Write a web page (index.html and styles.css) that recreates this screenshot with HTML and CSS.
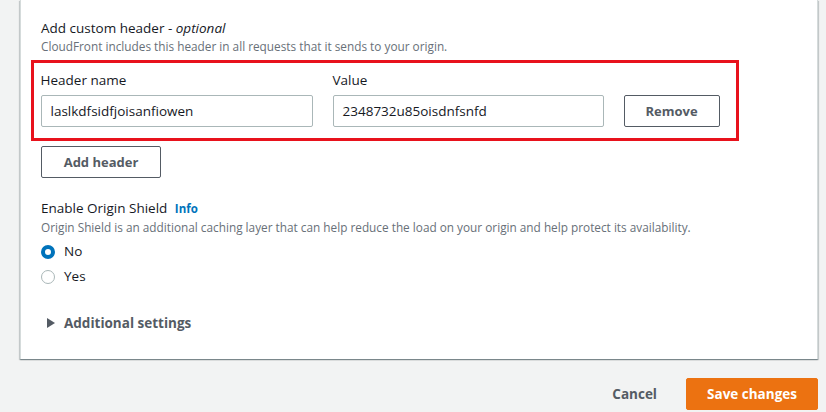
FILE: index.html
```html
<!DOCTYPE html>
<html>
<head>
<meta charset="utf-8">
<link rel="stylesheet" href="styles.css">
</head>
<body>
<div class="page">
  <div class="card">
    <div class="field-title">Add custom header - <em>optional</em></div>
    <div class="desc">CloudFront includes this header in all requests that it sends to your origin.</div>
    <div class="highlight">
      <div class="header-row">
        <div class="col col-name">
          <div class="label">Header name</div>
          <div class="input">laslkdfsidfjoisanfiowen</div>
        </div>
        <div class="col col-value">
          <div class="label">Value</div>
          <div class="input">2348732u85oisdnfsnfd</div>
        </div>
        <div class="col col-remove">
          <button class="btn btn-remove">Remove</button>
        </div>
      </div>
    </div>
    <button class="btn btn-add">Add header</button>

    <div class="shield">
      <div class="field-title">Enable Origin Shield <span class="info">Info</span></div>
      <div class="desc">Origin Shield is an additional caching layer that can help reduce the load on your origin and help protect its availability.</div>
      <div class="radios">
        <label class="radio"><span class="dot checked"></span>No</label>
        <label class="radio"><span class="dot"></span>Yes</label>
      </div>
    </div>

    <div class="expand"><span class="tri"></span>Additional settings</div>
  </div>

  <div class="actions">
    <button class="link-btn">Cancel</button>
    <button class="primary">Save changes</button>
  </div>
</div>
</body>
</html>
```

FILE: styles.css
```css
html, body {
  margin: 0;
  padding: 0;
}
body {
  background: #f2f3f3;
  font-family: "Open Sans", "Noto Sans", sans-serif;
  color: #16191f;
  width: 826px;
  height: 412px;
  overflow: hidden;
}
.page {
  padding-left: 20px;
  width: 798px;
}
.card {
  background: #fff;
  border-left: 1px solid #d5dbdb;
  border-right: 1px solid #d5dbdb;
  box-shadow: 0 1px 1px 0 rgba(0, 28, 36, 0.3), 1px 1px 1px 0 rgba(0, 28, 36, 0.15), -1px 1px 1px 0 rgba(0, 28, 36, 0.15);
  padding: 19px 20px 19px 20px;
  height: 321px;
}
.field-title {
  font-size: 13.5px;
  line-height: 18px;
  color: #16191f;
}
.field-title em {
  font-style: italic;
}
.desc {
  font-size: 11.8px;
  line-height: 18px;
  color: #687078;
}
.highlight {
  margin-left: -10px;
  margin-top: 5px;
  width: 695.5px;
  border: 3.5px solid #e8121c;
  padding: 8px 0 11px 6.5px;
}
.header-row {
  display: flex;
  align-items: flex-end;
}
.label {
  font-size: 13.5px;
  line-height: 18px;
  margin-bottom: 6px;
}
.col-name { width: 272px; margin-right: 20px; }
.col-value { width: 271px; margin-right: 20px; }
.input {
  box-sizing: border-box;
  height: 32px;
  border: 1px solid #aab7b8;
  border-radius: 2px;
  padding: 0 9px;
  font-size: 13.5px;
  line-height: 30px;
  color: #16191f;
}
.btn {
  box-sizing: border-box;
  background: #fff;
  border: 1px solid #545b64;
  border-radius: 2px;
  color: #545b64;
  font-family: "Open Sans", "Noto Sans", sans-serif;
  font-weight: 700;
  font-size: 13px;
  height: 32px;
  padding: 0 19px;
  cursor: pointer;
}
.btn-remove {
  width: 96px;
}
.btn-add {
  display: block;
  width: 120px;
  margin-top: 5px;
}
.shield {
  margin-top: 21px;
}
.info {
  color: #0073bb;
  font-weight: 700;
  font-size: 11.5px;
  margin-left: 4px;
}
.radios {
  margin-top: 3px;
}
.radio {
  display: flex;
  align-items: center;
  font-size: 13.5px;
  line-height: 25px;
  height: 25px;
}
.dot {
  box-sizing: border-box;
  width: 14px;
  height: 14px;
  border-radius: 50%;
  border: 1px solid #aab7b8;
  margin-right: 9px;
  background: #fff;
}
.dot.checked {
  border: 4px solid #0073bb;
}
.expand {
  margin-top: 25px;
  margin-left: 6px;
  font-size: 13.5px;
  font-weight: 700;
  color: #545b64;
  display: flex;
  align-items: center;
}
.tri {
  width: 0;
  height: 0;
  border-top: 5px solid transparent;
  border-bottom: 5px solid transparent;
  border-left: 8px solid #545b64;
  margin-right: 9px;
}
.actions {
  display: flex;
  justify-content: flex-end;
  align-items: center;
  margin-top: 19px;
}
.link-btn {
  background: none;
  border: none;
  color: #545b64;
  font-family: "Open Sans", "Noto Sans", sans-serif;
  font-weight: 700;
  font-size: 13.5px;
  padding: 0 20px;
  margin-right: 9px;
  height: 32px;
}
.primary {
  box-sizing: border-box;
  background: #ec7211;
  border: 1px solid #ec7211;
  border-radius: 2px;
  color: #fff;
  font-family: "Open Sans", "Noto Sans", sans-serif;
  font-weight: 700;
  font-size: 13.5px;
  height: 32px;
  width: 132px;
}
```
